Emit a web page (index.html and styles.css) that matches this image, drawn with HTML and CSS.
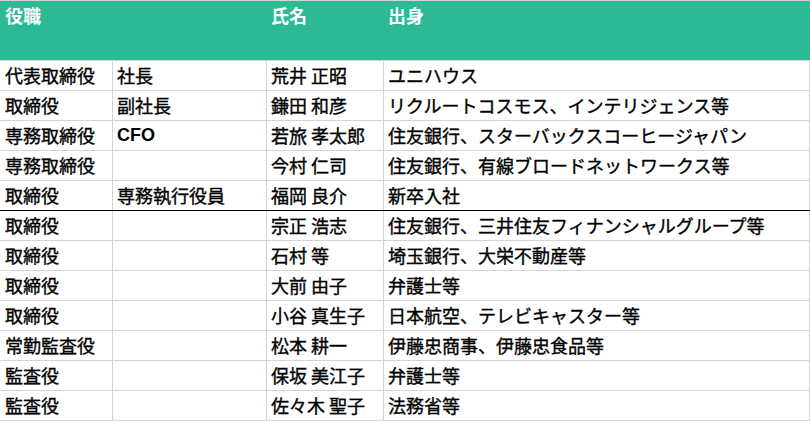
FILE: index.html
```html
<!DOCTYPE html>
<html lang="ja">
<head>
<meta charset="utf-8">
<link rel="stylesheet" href="styles.css">
</head>
<body>
<div class="sheet">
  <div class="row head">
    <div class="c c1">役職</div>
    <div class="c c2"></div>
    <div class="c c3">氏名</div>
    <div class="c c4">出身</div>
  </div>
  <div class="row"><div class="c c1">代表取締役</div><div class="c c2">社長</div><div class="c c3">荒井 正昭</div><div class="c c4">ユニハウス</div></div>
  <div class="row"><div class="c c1">取締役</div><div class="c c2">副社長</div><div class="c c3">鎌田 和彦</div><div class="c c4">リクルートコスモス、インテリジェンス等</div></div>
  <div class="row"><div class="c c1">専務取締役</div><div class="c c2 latin">CFO</div><div class="c c3">若旅 孝太郎</div><div class="c c4">住友銀行、スターバックスコーヒージャパン</div></div>
  <div class="row"><div class="c c1">専務取締役</div><div class="c c2"></div><div class="c c3">今村 仁司</div><div class="c c4">住友銀行、有線ブロードネットワークス等</div></div>
  <div class="row"><div class="c c1">取締役</div><div class="c c2">専務執行役員</div><div class="c c3">福岡 良介</div><div class="c c4">新卒入社</div></div>
  <div class="row split"><div class="c c1">取締役</div><div class="c c2"></div><div class="c c3">宗正 浩志</div><div class="c c4">住友銀行、三井住友フィナンシャルグループ等</div></div>
  <div class="row"><div class="c c1">取締役</div><div class="c c2"></div><div class="c c3">石村 等</div><div class="c c4">埼玉銀行、大栄不動産等</div></div>
  <div class="row"><div class="c c1">取締役</div><div class="c c2"></div><div class="c c3">大前 由子</div><div class="c c4">弁護士等</div></div>
  <div class="row"><div class="c c1">取締役</div><div class="c c2"></div><div class="c c3">小谷 真生子</div><div class="c c4">日本航空、テレビキャスター等</div></div>
  <div class="row"><div class="c c1">常勤監査役</div><div class="c c2"></div><div class="c c3">松本 耕一</div><div class="c c4">伊藤忠商事、伊藤忠食品等</div></div>
  <div class="row"><div class="c c1">監査役</div><div class="c c2"></div><div class="c c3">保坂 美江子</div><div class="c c4">弁護士等</div></div>
  <div class="row last"><div class="c c1">監査役</div><div class="c c2"></div><div class="c c3">佐々木 聖子</div><div class="c c4">法務省等</div></div>
</div>
</body>
</html>
```
FILE: styles.css
```css
html, body {
  margin: 0;
  padding: 0;
  background: #ffffff;
}
.sheet {
  width: 810px;
  font-family: "Noto Sans CJK JP", "Noto Sans", sans-serif;
  font-size: 18px;
  font-weight: 400;
  color: #000000;
  border-top: 1px solid #d4d4d4;
  -webkit-text-stroke: 0.35px currentColor;
}
.row {
  display: grid;
  grid-template-columns: 112px 154px 117px 427px;
  height: 30px;
  box-sizing: border-box;
  border-top: 1px solid #d4d4d4;
  line-height: 29px;
}
.row.head {
  height: 59px;
  border-top: none;
  background: #2db896;
  color: #ffffff;
  font-weight: 700;
  -webkit-text-stroke: 0;
}
.row.split {
  border-top-color: #000000;
}
.row.last {
  height: 31px;
  border-bottom: 1px solid #d4d4d4;
}
.c {
  white-space: nowrap;
  overflow: hidden;
  box-sizing: border-box;
}
.c1 {
  padding-left: 5px;
}
.c2, .c3, .c4 {
  border-left: 1px solid #d4d4d4;
  padding-left: 4px;
}
.c4 {
  border-right: 1px solid #d4d4d4;
}
.latin {
  font-family: "Liberation Sans", "Noto Sans CJK JP", sans-serif;
  font-weight: 700;
  -webkit-text-stroke: 0;
}
.head .c {
  border-color: transparent;
  border-left: none;
  border-right: none;
}
.head .c2, .head .c3, .head .c4 {
  padding-left: 5px;
}
```
